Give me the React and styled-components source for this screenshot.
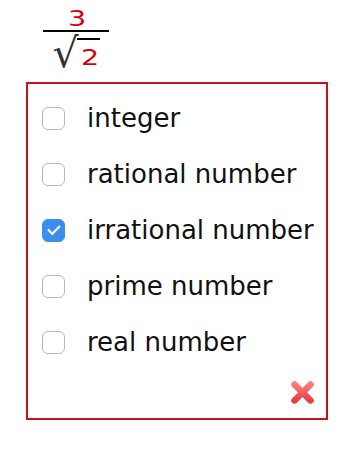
import React, { useState } from "react";
import styled, { createGlobalStyle } from "styled-components";

const GlobalStyle = createGlobalStyle`
  html, body {
    margin: 0;
    padding: 0;
    background: #ffffff;
  }
  body {
    font-family: "DejaVu Sans", Verdana, sans-serif;
    color: #111;
  }
`;

const Page = styled.div`
  padding: 8px 0 0 26px;
`;

const Fraction = styled.div`
  display: inline-flex;
  flex-direction: column;
  align-items: center;
  margin-left: 18px;
  width: 64px;
`;

const Digit = styled.span`
  display: inline-block;
  color: #d9000d;
  font-size: 22px;
  line-height: 22px;
  transform: scaleX(1.3);
`;

const Numerator = styled.div`
  width: 100%;
  height: 22px;
  text-align: center;
  padding-left: 2px;
  box-sizing: content-box;
  border-bottom: 2px solid #000;
`;

const Denominator = styled.div`
  display: flex;
  align-items: flex-start;
  padding-top: 6px;
  height: 36px;
  box-sizing: border-box;
`;

const Radical = styled.span`
  font-size: 41px;
  line-height: 36px;
  color: #333;
  margin-top: -3px;
  margin-right: -2px;
`;

const Radicand = styled.span`
  display: block;
  border-top: 2px solid #000;
  padding: 7px 3px 0 6px;
`;

const Box = styled.div`
  margin-top: 14px;
  width: 284px;
  border: 2px solid #c8101a;
  padding: 6px 0 13px 14px;
`;

const List = styled.div`
  display: flex;
  flex-direction: column;
`;

const Row = styled.label`
  display: flex;
  align-items: center;
  height: 56px;
  gap: 22px;
  cursor: pointer;
`;

const Check = styled.input.attrs({ type: "checkbox" })`
  appearance: none;
  margin: 0;
  width: 23px;
  height: 23px;
  border-radius: 6px;
  border: 1px solid #b9b9b9;
  background: #fff;
  box-sizing: border-box;
  display: grid;
  place-items: center;
  flex-shrink: 0;

  &:checked {
    background: #3b8ef0;
    border-color: #3b8ef0;
  }
  &:checked::after {
    content: "";
    width: 10px;
    height: 5px;
    border-left: 2.5px solid #fff;
    border-bottom: 2.5px solid #fff;
    transform: translateY(-2px) rotate(-45deg);
  }
`;

const Label = styled.span`
  font-size: 26px;
  line-height: 30px;
  color: #111;
  white-space: nowrap;
`;

const Footer = styled.div`
  display: flex;
  justify-content: flex-end;
  padding: 10px 11px 0 0;
`;

const Remove = styled.button`
  border: none;
  background: none;
  padding: 0;
  width: 25px;
  height: 25px;
  cursor: pointer;
`;

const options = [
  "integer",
  "rational number",
  "irrational number",
  "prime number",
  "real number",
];

export default function App() {
  const [checked, setChecked] = useState({ "irrational number": true });

  return (
    <Page>
      <GlobalStyle />
      <Fraction>
        <Numerator>
          <Digit>3</Digit>
        </Numerator>
        <Denominator>
          <Radical>√</Radical>
          <Radicand>
            <Digit>2</Digit>
          </Radicand>
        </Denominator>
      </Fraction>
      <Box>
        <List>
          {options.map((o) => (
            <Row key={o}>
              <Check
                checked={!!checked[o]}
                onChange={() => setChecked({ ...checked, [o]: !checked[o] })}
              />
              <Label>{o}</Label>
            </Row>
          ))}
        </List>
        <Footer>
          <Remove aria-label="remove">
            <svg width="25" height="25" viewBox="0 0 25 25">
              <defs>
                <linearGradient id="xg" x1="0" y1="0" x2="0" y2="1">
                  <stop offset="0" stopColor="#ff7b7b" />
                  <stop offset="1" stopColor="#e83f45" />
                </linearGradient>
              </defs>
              <g stroke="url(#xg)" strokeWidth="6.5" strokeLinecap="round">
                <line x1="4.5" y1="4.5" x2="20.5" y2="20.5" />
                <line x1="20.5" y1="4.5" x2="4.5" y2="20.5" />
              </g>
            </svg>
          </Remove>
        </Footer>
      </Box>
    </Page>
  );
}
